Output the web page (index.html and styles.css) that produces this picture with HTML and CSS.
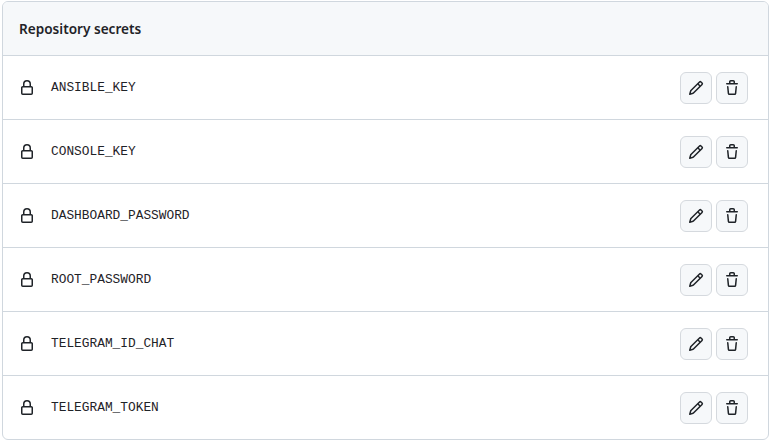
FILE: index.html
```html
<!DOCTYPE html>
<html lang="en">
<head>
    <meta charset="UTF-8">
    <meta name="viewport" content="width=device-width, initial-scale=1.0">
    <title>Repository secrets</title>
    <link rel="stylesheet" href="styles.css">
</head>
<body>
    <svg class="sprites" width="0" height="0" aria-hidden="true">
        <symbol id="lock" viewBox="0 0 16 16"><path d="M4 4a4 4 0 0 1 8 0v2h.25c.966 0 1.75.784 1.75 1.75v5.5A1.75 1.75 0 0 1 12.25 15h-8.5A1.75 1.75 0 0 1 2 13.25v-5.5C2 6.784 2.784 6 3.75 6H4Zm8.25 3.5h-8.5a.25.25 0 0 0-.25.25v5.5c0 .138.112.25.25.25h8.5a.25.25 0 0 0 .25-.25v-5.5a.25.25 0 0 0-.25-.25ZM10.5 6V4a2.5 2.5 0 1 0-5 0v2Z"/></symbol>
        <symbol id="pencil" viewBox="0 0 16 16"><path d="M11.013 1.427a1.75 1.75 0 0 1 2.474 0l1.086 1.086a1.75 1.75 0 0 1 0 2.474l-8.61 8.61c-.21.21-.47.364-.756.445l-3.251.93a.75.75 0 0 1-.927-.928l.929-3.25c.081-.286.235-.547.445-.758l8.61-8.61Zm.176 4.823L9.75 4.81l-6.286 6.287a.253.253 0 0 0-.064.108l-.558 1.953 1.953-.558a.253.253 0 0 0 .108-.064Zm1.238-3.763a.25.25 0 0 0-.354 0L10.811 3.75l1.439 1.44 1.263-1.263a.25.25 0 0 0 0-.354Z"/></symbol>
        <symbol id="trash" viewBox="0 0 16 16"><path d="M11 1.75V3h2.25a.75.75 0 0 1 0 1.5H2.75a.75.75 0 0 1 0-1.5H5V1.75C5 .784 5.784 0 6.75 0h2.5C10.216 0 11 .784 11 1.75ZM4.496 6.675l.66 6.6a.25.25 0 0 0 .249.225h5.19a.25.25 0 0 0 .249-.225l.66-6.6a.75.75 0 0 1 1.492.149l-.66 6.6A1.748 1.748 0 0 1 10.595 15h-5.19a1.75 1.75 0 0 1-1.741-1.575l-.66-6.6a.75.75 0 1 1 1.492-.15ZM6.5 1.75V3h3V1.75a.25.25 0 0 0-.25-.25h-2.5a.25.25 0 0 0-.25.25Z"/></symbol>
    </svg>

    <div class="box">
        <div class="box-header">Repository secrets</div>

        <div class="box-row">
            <svg class="icon lock"><use href="#lock"/></svg>
            <code class="secret-name">ANSIBLE_KEY</code>
            <button class="icon-btn" aria-label="Edit"><svg class="icon"><use href="#pencil"/></svg></button>
            <button class="icon-btn" aria-label="Delete"><svg class="icon"><use href="#trash"/></svg></button>
        </div>
        <div class="box-row">
            <svg class="icon lock"><use href="#lock"/></svg>
            <code class="secret-name">CONSOLE_KEY</code>
            <button class="icon-btn" aria-label="Edit"><svg class="icon"><use href="#pencil"/></svg></button>
            <button class="icon-btn" aria-label="Delete"><svg class="icon"><use href="#trash"/></svg></button>
        </div>
        <div class="box-row">
            <svg class="icon lock"><use href="#lock"/></svg>
            <code class="secret-name">DASHBOARD_PASSWORD</code>
            <button class="icon-btn" aria-label="Edit"><svg class="icon"><use href="#pencil"/></svg></button>
            <button class="icon-btn" aria-label="Delete"><svg class="icon"><use href="#trash"/></svg></button>
        </div>
        <div class="box-row">
            <svg class="icon lock"><use href="#lock"/></svg>
            <code class="secret-name">ROOT_PASSWORD</code>
            <button class="icon-btn" aria-label="Edit"><svg class="icon"><use href="#pencil"/></svg></button>
            <button class="icon-btn" aria-label="Delete"><svg class="icon"><use href="#trash"/></svg></button>
        </div>
        <div class="box-row">
            <svg class="icon lock"><use href="#lock"/></svg>
            <code class="secret-name">TELEGRAM_ID_CHAT</code>
            <button class="icon-btn" aria-label="Edit"><svg class="icon"><use href="#pencil"/></svg></button>
            <button class="icon-btn" aria-label="Delete"><svg class="icon"><use href="#trash"/></svg></button>
        </div>
        <div class="box-row">
            <svg class="icon lock"><use href="#lock"/></svg>
            <code class="secret-name">TELEGRAM_TOKEN</code>
            <button class="icon-btn" aria-label="Edit"><svg class="icon"><use href="#pencil"/></svg></button>
            <button class="icon-btn" aria-label="Delete"><svg class="icon"><use href="#trash"/></svg></button>
        </div>
    </div>
</body>
</html>
```

FILE: styles.css
```css
body {
    margin: 0;
    padding: 1px 1px 0 2px;
    background-color: #ffffff;
    color: #1f2328;
    font-family: "Noto Sans", "Open Sans", sans-serif;
    font-size: 14px;
}
.sprites {
    position: absolute;
}
.box {
    border: 1px solid #d0d7de;
    border-radius: 6px;
    overflow: hidden;
}
.box-header {
    height: 53px;
    padding-left: 16px;
    display: flex;
    align-items: center;
    background-color: #f6f8fa;
    font-weight: 600;
    font-size: 13.6px;
}
.box-row {
    height: 63px;
    padding: 0 20px 0 16px;
    display: flex;
    align-items: center;
    gap: 4px;
    border-top: 1px solid #d0d7de;
}
.icon {
    width: 16px;
    height: 16px;
    fill: currentColor;
    display: block;
}
.secret-name {
    flex: 1;
    margin-left: 12px;
    font-family: "Liberation Mono", monospace;
    font-size: 12.83px;
}
.icon-btn {
    width: 32px;
    height: 32px;
    padding: 0;
    display: flex;
    align-items: center;
    justify-content: center;
    background-color: #f6f8fa;
    border: 1px solid #d5d9de;
    border-radius: 6px;
    color: #1f2328;
    cursor: pointer;
}
```
